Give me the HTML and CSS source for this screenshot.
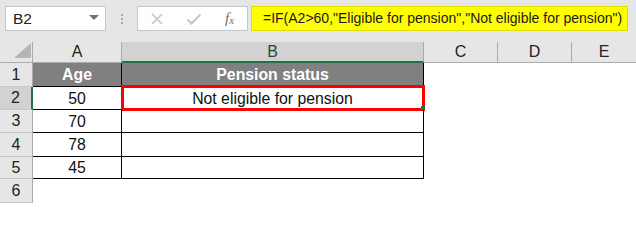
FILE: index.html
```html
<!DOCTYPE html>
<html>
<head>
<meta charset="utf-8">
<link rel="stylesheet" href="styles.css">
</head>
<body>
<div class="toolbar">
  <div class="namebox">
    <span class="name">B2</span>
    <span class="caret"></span>
  </div>
  <div class="dots"><i></i><i></i><i></i></div>
  <div class="fbuttons">
    <svg class="ico" width="14" height="14" viewBox="0 0 14 14"><path d="M2 2L12 12M12 2L2 12" stroke="#c4c4c4" stroke-width="1.6" fill="none"/></svg>
    <svg class="ico" width="16" height="14" viewBox="0 0 16 14"><path d="M1.5 7.5L5.5 11.5L14.5 2.5" stroke="#c4c4c4" stroke-width="2" fill="none"/></svg>
    <span class="fx">f<sub>x</sub></span>
  </div>
  <div class="formula">=IF(A2&gt;60,"Eligible for pension","Not eligible for pension")</div>
</div>
<div class="sheet">
  <div class="corner"><span class="tri"></span></div>
  <div class="colh">A</div>
  <div class="colh sel">B</div>
  <div class="colh">C</div>
  <div class="colh">D</div>
  <div class="colh last">E</div>

  <div class="rowh">1</div>
  <div class="cell head">Age</div>
  <div class="cell head">Pension status</div>
  <div class="blank"></div><div class="blank"></div><div class="blank"></div>

  <div class="rowh sel">2</div>
  <div class="cell">50</div>
  <div class="cell active">Not eligible for pension<span class="redbox"></span><span class="handle"></span></div>
  <div class="blank"></div><div class="blank"></div><div class="blank"></div>

  <div class="rowh">3</div>
  <div class="cell">70</div>
  <div class="cell"></div>
  <div class="blank"></div><div class="blank"></div><div class="blank"></div>

  <div class="rowh">4</div>
  <div class="cell">78</div>
  <div class="cell"></div>
  <div class="blank"></div><div class="blank"></div><div class="blank"></div>

  <div class="rowh">5</div>
  <div class="cell">45</div>
  <div class="cell"></div>
  <div class="blank"></div><div class="blank"></div><div class="blank"></div>

  <div class="rowh">6</div>
  <div class="blank"></div><div class="blank"></div>
  <div class="blank"></div><div class="blank"></div><div class="blank"></div>
</div>
</body>
</html>
```
FILE: styles.css
```css
html, body {
  margin: 0;
  padding: 0;
  width: 636px;
  height: 203px;
  overflow: hidden;
  background: #ffffff;
  font-family: "Liberation Sans", Arial, sans-serif;
}
.toolbar {
  height: 42px;
  background: #e6e6e6;
  display: flex;
  align-items: flex-start;
  padding-top: 6px;
  box-sizing: border-box;
}
.namebox {
  margin-left: 5px;
  width: 101px;
  height: 25px;
  box-sizing: border-box;
  background: #fff;
  border: 1px solid #c6c6c6;
  display: flex;
  align-items: center;
  justify-content: space-between;
  padding: 0 6px 0 7px;
}
.name {
  font-size: 15.5px;
  color: #222;
}
.caret {
  width: 0;
  height: 0;
  border-left: 5px solid transparent;
  border-right: 5px solid transparent;
  border-top: 5px solid #707070;
  margin-bottom: 2px;
}
.dots {
  width: 31px;
  height: 25px;
  display: flex;
  flex-direction: column;
  align-items: center;
  justify-content: center;
  gap: 2px;
}
.dots i {
  width: 2px;
  height: 2px;
  background: #a8a8a8;
}
.fbuttons {
  width: 111px;
  height: 25px;
  box-sizing: border-box;
  background: #fff;
  border: 1px solid #c6c6c6;
  display: flex;
  align-items: center;
  padding-left: 12px;
  gap: 22px;
}
.fx {
  font-family: "Liberation Serif", "DejaVu Serif", serif;
  font-style: italic;
  font-size: 15px;
  color: #6e6e6e;
  margin-left: 1px;
}
.fx sub {
  font-size: 11px;
  vertical-align: -1px;
}
.formula {
  margin-left: 3px;
  width: 377px;
  height: 25px;
  box-sizing: border-box;
  background: #ffff00;
  border: 1px solid #e0e000;
  padding-left: 11px;
  font-size: 14px;
  line-height: 23px;
  color: #1a1a1a;
  white-space: nowrap;
  overflow: hidden;
}
.sheet {
  display: grid;
  grid-template-columns: 33px 89px 302px 74px 74px 1fr;
  grid-template-rows: 21px 24px 23px 23px 24px 22px 24px;
}
.corner {
  background: #e6e6e6;
  border-right: 1px solid #ababab;
  border-bottom: 1px solid #ababab;
  box-sizing: border-box;
  position: relative;
}
.tri {
  position: absolute;
  right: 1px;
  bottom: 4px;
  width: 0;
  height: 0;
  border-left: 17px solid transparent;
  border-bottom: 15px solid #b5b5b5;
}
.colh {
  background: #e6e6e6;
  border-right: 1px solid #ababab;
  border-bottom: 1px solid #ababab;
  box-sizing: border-box;
  display: flex;
  align-items: center;
  justify-content: center;
  font-size: 16px;
  color: #222;
}
.colh.sel {
  background: #d2d2d2;
  border-bottom: 2px solid #217346;
  color: #1e4d33;
}
.colh.last {
  border-right: none;
}
.rowh {
  background: #e6e6e6;
  border-right: 1px solid #ababab;
  border-bottom: 1px solid #c8c8c8;
  box-sizing: border-box;
  display: flex;
  align-items: center;
  justify-content: center;
  font-size: 16px;
  color: #222;
}
.rowh.sel {
  background: #d2d2d2;
  border-right: 2px solid #217346;
}
.cell {
  border-right: 1px solid #000;
  border-bottom: 1px solid #000;
  box-sizing: border-box;
  display: flex;
  align-items: center;
  justify-content: center;
  font-size: 15.8px;
  color: #111;
  position: relative;
  padding-top: 1px;
}
.cell.head {
  background: #808080;
  color: #fff;
  font-weight: bold;
}
.blank {
  background: #fff;
}
.redbox {
  position: absolute;
  left: -1px;
  top: -2px;
  right: -2px;
  bottom: -2px;
  border: 3px solid #ff0000;
  pointer-events: none;
}
.handle {
  position: absolute;
  right: -2px;
  bottom: -1px;
  width: 4px;
  height: 4px;
  background: #217346;
}
```
